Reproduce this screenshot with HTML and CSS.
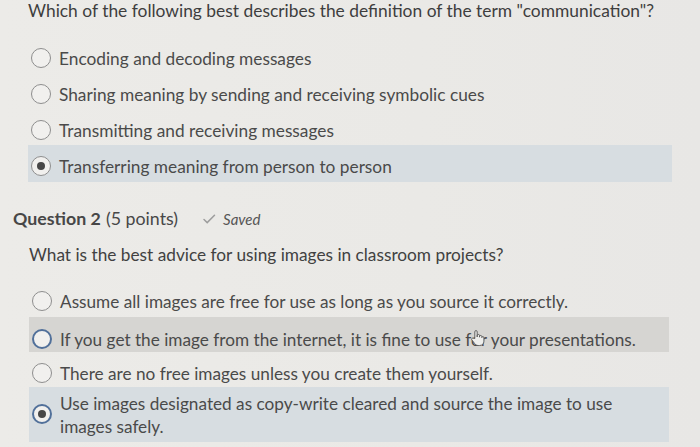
FILE: index.html
```html
<!DOCTYPE html>
<html>
<head>
<meta charset="utf-8">
<link rel="stylesheet" href="styles.css">
</head>
<body>
<div class="page">
  <section class="q1">
    <p class="qtext">Which of the following best describes the definition of the term "communication"?</p>
    <div class="opts">
      <div class="opt"><span class="radio"></span><span>Encoding and decoding messages</span></div>
      <div class="opt"><span class="radio"></span><span>Sharing meaning by sending and receiving symbolic cues</span></div>
      <div class="opt"><span class="radio"></span><span>Transmitting and receiving messages</span></div>
      <div class="opt sel"><span class="radio on"></span><span>Transferring meaning from person to person</span></div>
    </div>
  </section>
  <section class="q2">
    <div class="qhead"><span class="qnum">Question 2</span><span class="pts">(5 points)</span>
      <span class="saved"><svg width="14" height="12" viewBox="0 0 14 12"><path d="M2 6.5 L5.2 9.6 L12.5 2.2" fill="none" stroke="#9d9d9d" stroke-width="1.5" stroke-linecap="round"/></svg><i>Saved</i></span>
    </div>
    <p class="qtext2">What is the best advice for using images in classroom projects?</p>
    <div class="opts2">
      <div class="opt2 o1"><span class="radio"></span><span class="lbl">Assume all images are free for use as long as you source it correctly.</span></div>
      <div class="opt2 hover"><span class="radio blue"></span><span class="lbl">If you get the image from the internet, it is fine to use <span class="curwrap">for<svg class="hand" width="15" height="18" viewBox="0 0 14 16"><path d="M4.5 8.5 V2.2 a1.1 1.1 0 0 1 2.2 0 V7 V5.8 a1.1 1.1 0 0 1 2.2 0 V7.2 V6.4 a1.1 1.1 0 0 1 2.1 0 V7.6 a1 1 0 0 1 2 0.2 V11 c0 2.3 -1.6 4 -4 4 H7.6 c-1.6 0 -2.6 -0.8 -3.4 -2 L1.6 9.6 a1.1 1.1 0 0 1 1.7 -1.3 Z" fill="#eeeeec" stroke="#5a5a5a" stroke-width="0.9" stroke-linejoin="round"/></svg></span> your presentations.</span></div>
      <div class="opt2 o3"><span class="radio"></span><span class="lbl">There are no free images unless you create them yourself.</span></div>
      <div class="opt2 sel2"><span class="radio on blue"></span><span class="lbl">Use images designated as copy-write cleared and source the image to use images safely.</span></div>
    </div>
  </section>
</div>
</body>
</html>
```
FILE: styles.css
```css
html, body { margin: 0; padding: 0; }
body {
  width: 700px; height: 447px; overflow: hidden;
  background: linear-gradient(90deg, #ecebe8 0%, #eae9e6 60%, #e8e7e5 100%);
  font-family: Lato, "Open Sans", sans-serif;
  color: #4a4a4a;
}
.q1 { padding-left: 28px; width: 644px; }
.qtext { margin: 0; font-size: 17.4px; line-height: 21px; color: #3e3e3e; }
.opts { margin-top: 19px; display: flex; flex-direction: column; }
.opt {
  display: flex; align-items: center; box-sizing: border-box;
  height: 36px; padding-left: 3px; font-size: 17.3px; color: #4a4a4a;
}
.opt .radio { margin-right: 8px; }
.sel { background: #d7dde1; height: 37px; margin-top: -3px; padding-top: 5px; }
.radio {
  width: 20px; height: 20px; border-radius: 50%; border: 1.5px solid #8e8e8e; background: #f1f0ee;
  flex: none; box-sizing: border-box; position: relative;
}
.radio.on::after {
  content: ""; position: absolute; left: 4.5px; top: 4.5px; width: 8px; height: 8px; border-radius: 50%; background: #474747;
}
.radio.blue { border: 2px solid #51709a; }
.radio.blue.on::after { left: 4px; top: 4px; }

.q2 { padding-left: 13px; margin-top: 25px; }
.qhead { display: flex; align-items: baseline; font-size: 17.8px; line-height: 22px; color: #474747; }
.qnum { font-weight: 700; margin-right: 5px; }
.saved { margin-left: 24px; display: inline-flex; align-items: center; gap: 7px; font-size: 15px; color: #555; }
.qtext2 { margin: 14px 0 0 16px; font-size: 17.25px; line-height: 22px; color: #414141; }
.opts2 { margin-top: 18px; margin-left: 16px; width: 640px; display: flex; flex-direction: column; }
.opt2 {
  display: flex; align-items: center; box-sizing: border-box;
  padding-left: 3px; font-size: 17.2px; color: #4a4a4a; line-height: 23px;
}
.opt2 .radio { margin-right: 8px; }
.lbl { max-width: 594px; }
.o1 { height: 34px; }
.hover { background: #d6d5d2; height: 35px; padding-top: 9px; margin-top: -1px; }
.o3 { height: 35px; padding-top: 7px; }
.sel2 { background: #d7dde1; height: 55px; padding-top: 4px; padding-bottom: 4px; }
.sel2 .radio { margin-top: -1px; }
.curwrap { position: relative; }
.hand { position: absolute; left: 5px; top: 0px; }
```
